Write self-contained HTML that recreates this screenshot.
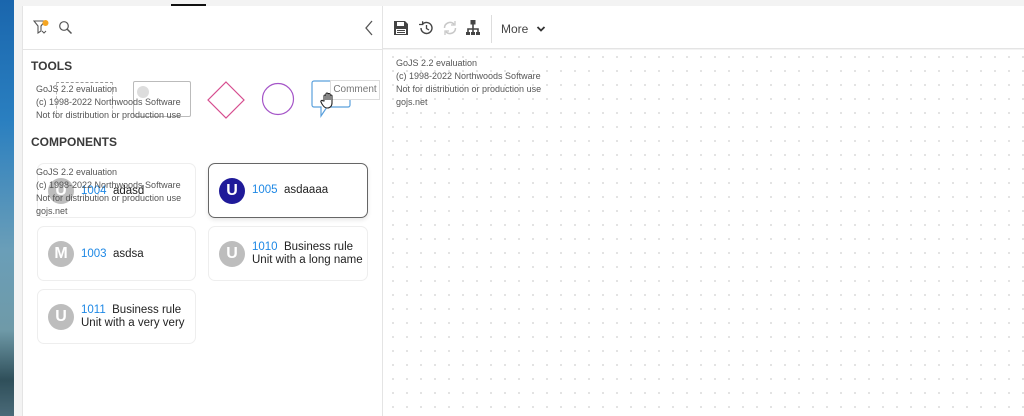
<!DOCTYPE html>
<html><head><style>
*{margin:0;padding:0;box-sizing:border-box}
body{width:1024px;height:416px;overflow:hidden;background:#f3f3f3;font-family:"Liberation Sans",sans-serif;position:relative}
.a{position:absolute}
.wm{position:absolute;font-size:9px;line-height:13px;color:#555;white-space:nowrap}
.card{position:absolute;width:159px;height:55px;background:#fff;border:1px solid #eee;border-radius:7px}
.av{position:absolute;left:10px;top:14px;width:26px;height:26px;border-radius:50%;background:#bdbdbd;color:#fff;font-weight:bold;font-size:16px;text-align:center;line-height:26px}
.tx{position:absolute;left:43px;font-size:11.5px;color:#222;white-space:nowrap;line-height:13px}
.tx b{font-weight:normal;color:#1e88e5}
</style></head><body>
<div class="a" style="left:0;top:0;width:14px;height:416px;background:linear-gradient(#1a66ad 0,#2a7fc0 120px,#6a9eb8 250px,#6f9aa8 330px,#2f4f5a 380px,#4a6a78 416px)"></div>
<div class="a" style="left:171px;top:4px;width:35px;height:2px;background:#111"></div>
<div class="a" style="left:22px;top:6px;width:361px;height:410px;background:#fff;border-left:1px solid #e4e4e4;border-right:1px solid #e4e4e4"></div>
<div class="a" style="left:23px;top:49px;width:359px;height:1px;background:#e4e4e4"></div>
<svg class="a" style="left:33px;top:19px" width="18" height="18" viewBox="0 0 18 18"><path d="M1 2h11l-4 5v5l-3 2V7z" fill="none" stroke="#555" stroke-width="1.1"/><path d="M9 12l2 2 2-2" fill="none" stroke="#555" stroke-width="1"/><circle cx="12.5" cy="4" r="3" fill="#f5a623"/></svg>
<svg class="a" style="left:58px;top:20px" width="16" height="16" viewBox="0 0 16 16"><circle cx="6" cy="6" r="4.3" fill="none" stroke="#555" stroke-width="1.2"/><path d="M9 9l4.5 4.5" stroke="#555" stroke-width="1.5"/></svg>
<svg class="a" style="left:364px;top:20px" width="10" height="16" viewBox="0 0 10 16"><path d="M8 1L2 8l6 7" fill="none" stroke="#555" stroke-width="1.3"/></svg>
<div class="a" style="left:31px;top:59px;font-size:12px;font-weight:bold;color:#3a3a3a">TOOLS</div>
<div class="a" style="left:56px;top:82px;width:57px;height:36px;border-top:1px dashed #999;border-left:1px dashed #bbb;border-right:1px dashed #bbb"></div>
<div class="a" style="left:133px;top:81px;width:58px;height:36px;border:1px solid #bbb;border-radius:2px"></div>
<div class="a" style="left:137px;top:86px;width:12px;height:12px;border-radius:50%;background:#ddd"></div>
<svg class="a" style="left:206px;top:80px" width="40" height="40"><path d="M20 2L38 20 20 38 2 20z" fill="none" stroke="#d64d8f" stroke-width="1.2"/></svg>
<svg class="a" style="left:261px;top:82px" width="34" height="34"><circle cx="17" cy="17" r="15.5" fill="none" stroke="#a555c8" stroke-width="1.2"/></svg>
<svg class="a" style="left:309px;top:79px" width="45" height="42"><path d="M5 2h34a2 2 0 0 1 2 2v22a2 2 0 0 1-2 2H18l-6 9v-9H5a2 2 0 0 1-2-2V4a2 2 0 0 1 2-2z" fill="#fff" stroke="#5aa0dc" stroke-width="1.2"/></svg>
<div class="a" style="left:330px;top:80px;width:50px;height:20px;background:#fff;border:1px solid #ddd;font-size:10px;color:#777;line-height:18px;text-align:center">Comment</div>
<svg class="a" style="left:320px;top:91px" width="18" height="20" viewBox="0 0 18 20"><path d="M4 10V5a1 1 0 0 1 2 0v4V3a1 1 0 0 1 2 0v6V3.5a1 1 0 0 1 2 0V9V5a1 1 0 0 1 2 0v7c0 3-2 5-4.5 5S4 16 2 13l-1-2a1 1 0 0 1 2-1z" fill="#fff" stroke="#222" stroke-width="1.1"/></svg>
<div class="wm" style="left:36px;top:83px">GoJS 2.2 evaluation<br>(c) 1998-2022 Northwoods Software<br>Not for distribution or production use</div>
<div class="a" style="left:31px;top:135px;font-size:12px;font-weight:bold;color:#3a3a3a">COMPONENTS</div>
<div class="card" style="left:37px;top:163px"><div class="av">U</div><div class="tx" style="top:21px"><b>1004</b>&nbsp; adasd</div></div>
<div class="card" style="left:208px;top:163px;width:160px;border:1px solid #666;box-shadow:0 2px 4px rgba(0,0,0,.1)"><div class="av" style="background:#1f1a99">U</div><div class="tx" style="top:20px"><b>1005</b>&nbsp; asdaaaa</div></div>
<div class="wm" style="left:36px;top:166px">GoJS 2.2 evaluation<br>(c) 1998-2022 Northwoods Software<br>Not for distribution or production use<br>gojs.net</div>
<div class="card" style="left:37px;top:226px"><div class="av">M</div><div class="tx" style="top:21px"><b>1003</b>&nbsp; asdsa</div></div>
<div class="card" style="left:208px;top:226px;width:160px"><div class="av">U</div><div class="tx" style="top:14px"><b>1010</b>&nbsp; Business rule<br>Unit with a long name</div></div>
<div class="card" style="left:37px;top:289px"><div class="av">U</div><div class="tx" style="top:14px;width:107px;overflow:hidden"><b>1011</b>&nbsp; Business rule<br>Unit with a very very long</div></div>
<div class="a" style="left:383px;top:6px;width:641px;height:43px;background:#fff;border-bottom:1px solid #e4e4e4"></div>
<div class="a" style="left:383px;top:50px;width:641px;height:366px;background-color:#fff;background-image:radial-gradient(circle,#d0d0d0 0.7px,transparent 1px);background-size:14px 14px;background-position:3px 0px"></div>
<svg class="a" style="left:393px;top:20px" width="16" height="16" viewBox="0 0 16 16"><path d="M1 1h11l3 3v11H1z" fill="#444"/><rect x="4" y="2" width="7" height="4" fill="#fff"/><rect x="3" y="9" width="10" height="5" fill="#fff"/><path d="M4 10.5h8M4 12.5h8" stroke="#444"/></svg>
<svg class="a" style="left:418px;top:20px" width="16" height="16" viewBox="0 0 16 16"><path d="M3 8a5.5 5.5 0 1 0 1.6-3.9" fill="none" stroke="#444" stroke-width="1.4"/><path d="M1 4.5l3.6 0 0-3.3" fill="none" stroke="#444" stroke-width="1.3"/><path d="M8.5 5v3.5l2.5 1.5" fill="none" stroke="#444" stroke-width="1.3"/></svg>
<svg class="a" style="left:442px;top:20px" width="16" height="16" viewBox="0 0 16 16"><path d="M2.5 8A5.5 5.5 0 0 1 12 4.2M13.5 8A5.5 5.5 0 0 1 4 11.8" fill="none" stroke="#c8c8c8" stroke-width="1.5"/><path d="M13 1v4h-4M3 15v-4h4" fill="none" stroke="#c8c8c8" stroke-width="1.3"/></svg>
<svg class="a" style="left:465px;top:19px" width="16" height="17" viewBox="0 0 16 17"><rect x="5.5" y="1" width="5" height="4.5" fill="#444"/><path d="M8 5v4M3 15V10h10v5M8 9v6" stroke="#444" stroke-width="1.6" fill="none"/><rect x="1" y="13" width="4" height="3" fill="#444"/><rect x="6" y="13" width="4" height="3" fill="#444"/><rect x="11" y="13" width="4" height="3" fill="#444"/></svg>
<div class="a" style="left:491px;top:15px;width:1px;height:28px;background:#ddd"></div>
<div class="a" style="left:501px;top:22px;font-size:12px;color:#444">More</div>
<svg class="a" style="left:536px;top:24px" width="10" height="10"><path d="M1.5 3l3.5 3.5L8.5 3" fill="none" stroke="#333" stroke-width="1.8"/></svg>
<div class="wm" style="left:396px;top:57px">GoJS 2.2 evaluation<br>(c) 1998-2022 Northwoods Software<br>Not for distribution or production use<br>gojs.net</div>
</body></html>
